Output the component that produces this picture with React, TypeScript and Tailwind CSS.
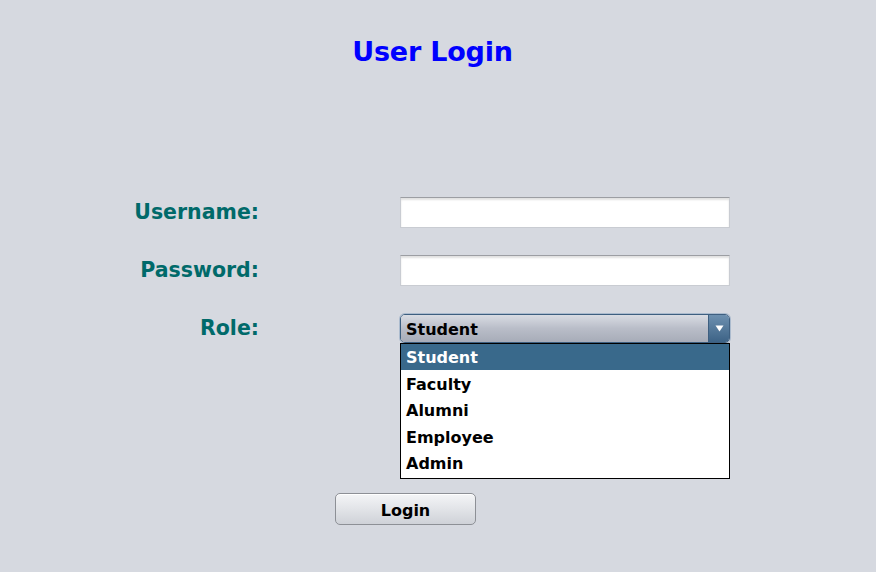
import React from 'react'

const roles = ['Student', 'Faculty', 'Alumni', 'Employee', 'Admin']

function TextField() {
  return (
    <div className="ml-[141px] w-[330px] h-[31px] bg-white border border-[#c9ccd2] border-t-[#9c9ea3] shadow-[inset_0_2px_2px_rgba(0,0,0,0.12)]" />
  )
}

function Label({ children }: { children: React.ReactNode }) {
  return (
    <div className="w-[259px] text-right text-[20.5px] font-bold text-[#006a6a] leading-none">{children}</div>
  )
}

export default function App() {
  return (
    <div className="w-[876px] h-[572px] bg-[#d6d9e0] font-['DejaVu_Sans',sans-serif] overflow-hidden">
      <h1 className="pt-[36px] pr-[11px] text-center text-[27px] tracking-[-0.2px] font-bold text-[#0000ff] leading-[32px]">
        User Login
      </h1>

      <div className="mt-[129px] flex flex-col">
        <div className="flex items-center">
          <Label>Username:</Label>
          <TextField />
        </div>

        <div className="mt-[27px] flex items-center">
          <Label>Password:</Label>
          <TextField />
        </div>

        <div className="mt-[28px] flex items-center">
          <Label>Role:</Label>
          <div className="relative ml-[141px] w-[330px]">
            <div className="flex h-[29px] rounded-[5px] border border-[#3e5f80] shadow-[0_0_0_1px_rgba(120,150,185,0.45)] overflow-hidden">
              <div className="flex-1 flex items-center pl-[5px] pt-[3px] bg-gradient-to-b from-[#d9dce3] via-[#b9bdc8] to-[#a7acb8] text-[16px] font-bold text-black">
                Student
              </div>
              <div className="w-[21px] flex items-center justify-center border-l border-[#3e5f80] bg-gradient-to-b from-[#6d90b0] to-[#3d6386]">
                <svg width="9" height="7" viewBox="0 0 9 7">
                  <path d="M0.5 0.5 H8.5 L4.5 6.5 Z" fill="#ffffff" />
                </svg>
              </div>
            </div>

            <ul className="absolute left-0 top-[29px] w-[330px] bg-white border border-black">
              {roles.map((r, i) => (
                <li
                  key={r}
                  className={
                    i === 0
                      ? 'h-[26px] pl-[5px] pt-[1px] flex items-center bg-[#39698b] text-white text-[16px] font-bold'
                      : 'h-[26.5px] pl-[5px] pt-[3px] flex items-center text-black text-[16px] font-bold'
                  }
                >
                  {r}
                </li>
              ))}
              <li className="h-[2px]" />
            </ul>
          </div>
        </div>

        <div className="mt-[150px] ml-[335px]">
          <button className="w-[141px] h-[32px] pt-[3px] rounded-[5px] border border-[#8d9096] bg-gradient-to-b from-[#f4f5f7] via-[#e2e4e8] to-[#cfd2d8] shadow-[inset_0_1px_0_#ffffff] text-[16px] font-bold text-black leading-none">
            Login
          </button>
        </div>
      </div>
    </div>
  )
}
